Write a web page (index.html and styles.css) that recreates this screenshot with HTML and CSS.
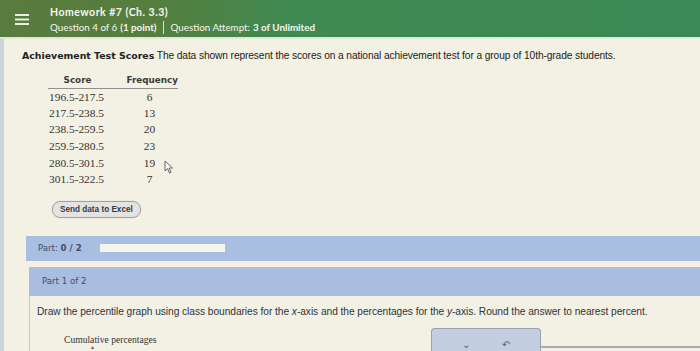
FILE: index.html
```html
<!DOCTYPE html>
<html>
<head>
<meta charset="utf-8">
<link rel="stylesheet" href="styles.css">
</head>
<body>
<header class="topbar">
  <div class="menu">
    <svg width="14" height="11" viewBox="0 0 14 11"><rect x="0" y="0" width="14" height="2" fill="#e8efe0"/><rect x="0" y="4.5" width="14" height="2" fill="#e8efe0"/><rect x="0" y="9" width="14" height="2" fill="#e8efe0"/></svg>
  </div>
  <div class="titles">
    <div class="hw">Homework #7 (Ch. 3.3)</div>
    <div class="qline">Question 4 of 6 <b>(1 point)</b><span class="sep"></span>Question Attempt: <b>3 of Unlimited</b></div>
  </div>
</header>
<main class="page">
  <p class="intro"><b>Achievement Test Scores</b> The data shown represent the scores on a national achievement test for a group of 10th-grade students.</p>
  <table class="data">
    <thead><tr><th>Score</th><th>Frequency</th></tr></thead>
    <tbody>
      <tr><td>196.5-217.5</td><td>6</td></tr>
      <tr><td>217.5-238.5</td><td>13</td></tr>
      <tr><td>238.5-259.5</td><td>20</td></tr>
      <tr><td>259.5-280.5</td><td>23</td></tr>
      <tr><td>280.5-301.5</td><td>19</td></tr>
      <tr><td>301.5-322.5</td><td>7<span class="cursor"><svg width="10" height="14" viewBox="0 0 10 14"><path d="M1 1 L1 11 L3.5 8.5 L5.5 13 L7 12.3 L5 8 L8.5 8 Z" fill="#fff" stroke="#555" stroke-width="0.9"/></svg></span></td></tr>
    </tbody>
  </table>
  <div class="btnrow"><span class="excel">Send data to Excel</span></div>
  <div class="partbar">
    <span class="partlabel">Part: <b>0 / 2</b></span>
    <span class="progress"></span>
  </div>
  <div class="partsection">
    <div class="parthead">Part 1 of 2</div>
    <div class="partbody">
      <p class="instr">Draw the percentile graph using class boundaries for the <i>x</i>-axis and the percentages for the <i>y</i>-axis. Round the answer to nearest percent.</p>
      <div class="graphrow">
        <div class="ylabel">Cumulative percentages<span class="arrow">▲</span></div>
        <div class="tools"><span>⌄</span><span>↶</span></div>
        <div class="rule"></div>
      </div>
    </div>
  </div>
</main>
</body>
</html>
```
FILE: styles.css
```css
* { box-sizing: border-box; }
html, body { margin: 0; padding: 0; }
body {
  width: 700px;
  height: 351px;
  overflow: hidden;
  background: #f2f1e4;
  font-family: "Liberation Sans", Arial, sans-serif;
}
.topbar {
  height: 39px;
  display: flex;
  align-items: center;
  background: linear-gradient(to right, #5a7b3d 0%, #557e3e 22%, #3f8a52 42%, #3b8955 100%);
  border-bottom: 2px solid #dfe6dc;
  color: #f4f8f0;
}
.menu { width: 50px; padding-left: 15px; padding-top: 2px; display: flex; }
.titles { display: flex; flex-direction: column; gap: 3px; padding-top: 2px; }
.hw { font-family: "Lato", sans-serif; font-weight: 700; font-size: 10.5px; letter-spacing: 0.5px; }
.qline { font-family: "Lato", sans-serif; font-size: 9.8px; display: flex; align-items: center; }
.qline b { margin-left: 3px; }
.sep { display: inline-block; width: 1px; height: 13px; background: #d6e2d4; margin: 0 7px 0 6px; }
.page {
  border-left: 4px solid #cdd3db;
  height: 312px;
}
.intro {
  margin: 0;
  padding: 11px 0 0 18px;
  font-size: 10.2px;
  color: #222;
  letter-spacing: -0.1px;
  line-height: 12px;
}
.intro b { font-family: "DejaVu Sans", sans-serif; font-size: 9.4px; letter-spacing: 0; }
.data {
  margin: 12px 0 0 44px;
  border-collapse: collapse;
  font-family: "Liberation Serif", serif;
  font-size: 11.4px;
  color: #333;
}
.data th {
  font-family: "DejaVu Sans", sans-serif;
  font-size: 8.8px;
  font-weight: 700;
  color: #3a3a3a;
  padding: 0 0 2px 0;
  border-bottom: 1px solid #8f8f8f;
  height: 14px;
}
.data th:first-child { width: 73px; text-align: center; padding-right: 14px; }
.data th:last-child { width: 57px; text-align: right; }
.data td { height: 16.6px; padding: 0; }
.data td:first-child { padding-left: 1px; }
.data td:last-child { text-align: center; position: relative; }
.cursor { position: absolute; left: 43px; top: -11px; }
.btnrow { padding: 10px 0 0 48px; }
.excel {
  display: inline-block;
  border: 1px solid #9ea3aa;
  border-radius: 8px;
  background: #e3e4e2;
  font-family: "Liberation Sans", sans-serif;
  font-weight: 700;
  font-size: 8.2px;
  color: #353a44;
  padding: 3px 7px 3px 7px;
  box-shadow: 0 0 0 1px #eceae0;
}
.partbar {
  margin: 18px 0 0 22px;
  height: 25px;
  background: #a9bfe1;
  display: flex;
  align-items: center;
  padding-left: 12px;
}
.partlabel { font-family: "DejaVu Sans", sans-serif; font-size: 8.6px; color: #3e4e6e; width: 62px; }
.partlabel b { font-weight: 700; }
.progress { width: 125px; height: 8px; background: #f6f5ef; }
.partsection { margin: 6px 0 0 25px; }
.parthead {
  height: 29px;
  background: #a9bde0;
  display: flex;
  align-items: center;
  padding-left: 13px;
  font-family: "DejaVu Sans", sans-serif;
  font-size: 8.6px;
  color: #3e4e6e;
}
.partbody { border-left: 1px solid #c6c8c4; height: 60px; }
.instr {
  margin: 0;
  padding: 10px 0 0 7px;
  font-size: 10.2px;
  color: #2e3440;
  letter-spacing: -0.05px;
  line-height: 12px;
}
.graphrow { display: flex; align-items: flex-start; margin-top: 16px; }
.ylabel {
  font-family: "Liberation Serif", serif;
  font-size: 9.6px;
  color: #333;
  width: 401px;
  padding-left: 34px;
  position: relative;
}
.arrow { position: absolute; left: 60px; top: 11px; font-size: 5px; color: #555; }
.tools {
  margin-top: -6px;
  width: 110px;
  height: 24px;
  border: 1px solid #9aa0a8;
  border-bottom: none;
  border-radius: 4px 4px 0 0;
  background: #c3cee0;
  display: flex;
  justify-content: space-around;
  align-items: center;
  font-size: 10px;
  line-height: 10px;
  color: #56607a;
  padding: 10px 14px 0;
}
.rule { flex: 1; height: 2px; background: #a8acb2; margin-top: 12px; }
```
